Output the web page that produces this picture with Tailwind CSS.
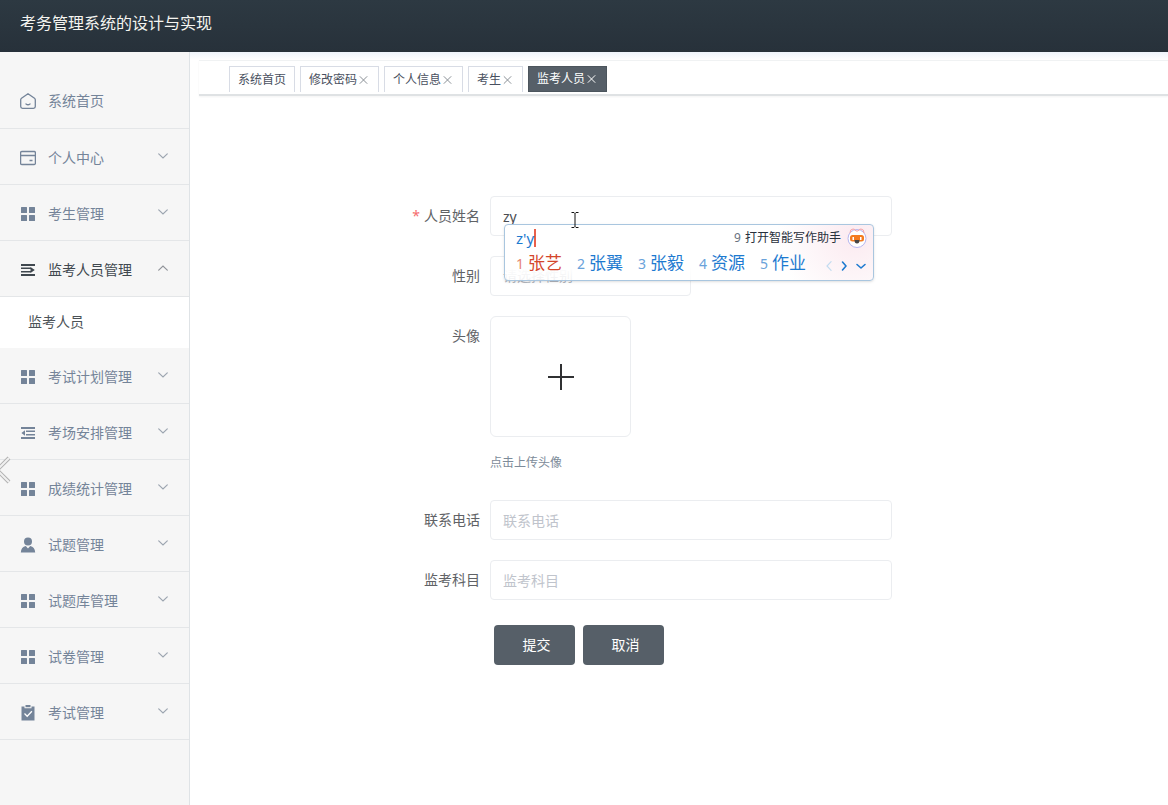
<!DOCTYPE html>
<html lang="zh-CN">
<head>
<meta charset="utf-8">
<meta name="viewport" content="width=device-width, initial-scale=1">
<title>考务管理系统的设计与实现</title>
<script src="https://cdn.jsdelivr.net/npm/@tailwindcss/browser@4"></script>
</head>
<body class="flex min-h-screen flex-col bg-white font-['Noto_Sans','Noto_Sans_CJK_SC',sans-serif] text-sm text-[#606266]">

<svg class="hidden" aria-hidden="true">
  <symbol id="grid" viewBox="0 0 16 16"><path fill="currentColor" d="M1.5 1h5q.5 0 .5.5v5q0 .5-.5.5h-5q-.5 0-.5-.5v-5q0-.5.5-.5zM9.500 1h5q.5 0 .5.5v5q0 .5-.5.5h-5q-.5 0-.5-.5v-5q0-.5.5-.5zM1.500 9h5q.5 0 .5.5v5q0 .5-.5.5h-5q-.5 0-.5-.5v-5q0-.5.5-.5zM9.500 9h5q.5 0 .5.5v5q0 .5-.5.5h-5q-.5 0-.5-.5v-5q0-.5.5-.5z"/></symbol>
  <symbol id="home" viewBox="0 0 16 16"><path fill="none" stroke="currentColor" stroke-width="1.300" stroke-linecap="round" stroke-linejoin="round" d="M8 .7 1.500 5.300q-.8.6-.8 1.500V13.500q0 1.800 1.800 1.800h11q1.800 0 1.800-1.800V6.800q0-.9-.8-1.500zM6 11q2 1.500 4 0"/></symbol>
  <symbol id="card" viewBox="0 0 16 16"><path fill="none" stroke="currentColor" stroke-width="1.300" d="M1.800 1.500h12.400q1.200 0 1.200 1.200v10.600q0 1.200-1.200 1.200H1.800q-1.200 0-1.200-1.200V2.700q0-1.200 1.200-1.200zM.6 5.500h14.800M9.500 10.500h3"/></symbol>
  <symbol id="unfold" viewBox="0 0 16 16"><path fill="currentColor" d="M1 2h14v2H1zM1 12h14v2H1zM1 5.400h9.500V7H1zM1 9h9.500v1.600H1zM10.500 5 14.800 8l-4.300 3z"/></symbol>
  <symbol id="fold" viewBox="0 0 16 16"><path fill="currentColor" d="M1 2h14v2H1zM1 12h14v2H1zM6 5.400h9V7H6zM6 9h9v1.600H6zM5 5.300 1.400 8 5 10.700z"/></symbol>
  <symbol id="user" viewBox="0 0 16 16"><circle cx="8" cy="4.500" r="4" fill="currentColor"/><path fill="currentColor" d="M.8 15.500C1 11.500 2.800 9.300 5.800 8.900L8 11.600l2.200-2.700c3 .4 4.800 2.600 5 6.600z"/></symbol>
  <symbol id="task" viewBox="0 0 16 16"><path fill="currentColor" d="M5.500 0h5v2.200h-5z"/><path fill="currentColor" d="M1.500 1.500h3v1.800h7V1.500h3v14h-13z"/><path fill="none" stroke="#fff" stroke-width="1.300" d="m4.500 8.500 2.700 2.700 4.700-4.900"/></symbol>
  <symbol id="down" viewBox="0 0 12 12"><path fill="none" stroke="currentColor" stroke-width="1.200" stroke-linecap="round" d="m1.700 3.900 4.300 4.100 4.300-4.100"/></symbol>
  <symbol id="arrow" viewBox="0 0 12 12"><path fill="none" stroke="currentColor" stroke-width="1.600" stroke-linecap="round" stroke-linejoin="round" d="m2 4.500 4 3.500 4-3.500"/></symbol>
  <symbol id="close" viewBox="0 0 10 10"><path fill="none" stroke="currentColor" d="m1.300 1.300 7.400 7.400m0-7.400-7.400 7.400"/></symbol>
</svg>

<header class="flex h-[52px] items-start bg-linear-to-b from-[#2d3942] to-[#27313a] px-5 pt-[11px]">
  <h1 class="text-base leading-6 text-[#f4f4f0]">考务管理系统的设计与实现</h1>
</header>

<div class="relative flex flex-1">
  <nav class="w-[190px] shrink-0 border-r border-[#dfe3e6] bg-[#f6f6f6] pt-[21px] text-[#748499]">
    <a href="#" class="flex h-14 items-center gap-3 border-b border-[#e4e6e8] px-5"><svg class="size-4"><use href="#home"/></svg>系统首页</a>
    <button type="button" class="flex h-14 w-full items-center gap-3 border-b border-[#e4e6e8] px-5 pt-0.5"><svg class="size-4"><use href="#card"/></svg>个人中心<svg class="mb-1 ml-auto size-3 text-[#9ca5b0]"><use href="#down"/></svg></button>
    <button type="button" class="flex h-14 w-full items-center gap-3 border-b border-[#e4e6e8] px-5 pt-0.5"><svg class="size-4"><use href="#grid"/></svg>考生管理<svg class="mb-1 ml-auto size-3 text-[#9ca5b0]"><use href="#down"/></svg></button>
    <button type="button" aria-expanded="true" class="flex h-14 w-full items-center gap-3 border-b border-[#e4e6e8] px-5 pt-0.5 text-[#40484f]"><svg class="size-4"><use href="#unfold"/></svg>监考人员管理<svg class="mb-1 ml-auto size-3 rotate-180 text-[#909399]"><use href="#down"/></svg></button>
    <a href="#" class="flex h-[51px] items-center bg-white px-7 pb-0.5 text-[#4c5358]">监考人员</a>
    <button type="button" class="flex h-14 w-full items-center gap-3 border-b border-[#e4e6e8] px-5 pt-0.5"><svg class="size-4"><use href="#grid"/></svg>考试计划管理<svg class="mb-1 ml-auto size-3 text-[#9ca5b0]"><use href="#down"/></svg></button>
    <button type="button" class="flex h-14 w-full items-center gap-3 border-b border-[#e4e6e8] px-5 pt-0.5"><svg class="size-4"><use href="#fold"/></svg>考场安排管理<svg class="mb-1 ml-auto size-3 text-[#9ca5b0]"><use href="#down"/></svg></button>
    <button type="button" class="flex h-14 w-full items-center gap-3 border-b border-[#e4e6e8] px-5 pt-0.5"><svg class="size-4"><use href="#grid"/></svg>成绩统计管理<svg class="mb-1 ml-auto size-3 text-[#9ca5b0]"><use href="#down"/></svg></button>
    <button type="button" class="flex h-14 w-full items-center gap-3 border-b border-[#e4e6e8] px-5 pt-0.5"><svg class="size-4"><use href="#user"/></svg>试题管理<svg class="mb-1 ml-auto size-3 text-[#9ca5b0]"><use href="#down"/></svg></button>
    <button type="button" class="flex h-14 w-full items-center gap-3 border-b border-[#e4e6e8] px-5 pt-0.5"><svg class="size-4"><use href="#grid"/></svg>试题库管理<svg class="mb-1 ml-auto size-3 text-[#9ca5b0]"><use href="#down"/></svg></button>
    <button type="button" class="flex h-14 w-full items-center gap-3 border-b border-[#e4e6e8] px-5 pt-0.5"><svg class="size-4"><use href="#grid"/></svg>试卷管理<svg class="mb-1 ml-auto size-3 text-[#9ca5b0]"><use href="#down"/></svg></button>
    <button type="button" class="flex h-14 w-full items-center gap-3 border-b border-[#e4e6e8] px-5 pt-0.5"><svg class="size-4"><use href="#task"/></svg>考试管理<svg class="mb-1 ml-auto size-3 text-[#9ca5b0]"><use href="#down"/></svg></button>
  </nav>

  <!-- Previous-page handle at the window edge -->
  <button type="button" aria-label="上一页" class="absolute top-[404px] left-0">
    <svg class="h-7 w-3" viewBox="0 0 12 28" fill="none"><path stroke="#b0b0b0" stroke-width="4" d="M9 2-3 14 9 26"/><path stroke="#f0f0f0" stroke-width="2" d="M9 2-3 14 9 26"/></svg>
  </button>

  <main class="min-w-0 flex-1">
    <div class="h-2 bg-linear-to-b from-[#eef4fb] to-white"></div>
    <div class="ml-[9px] flex h-9 items-end gap-[5px] border-t border-b-2 border-t-[#f0f2f3] border-b-[#dfe2e4] pb-0.5 pl-[30px] text-xs text-[#495060] shadow-xs">
      <a href="#" class="flex h-[26px] items-center border border-b-0 border-[#d8dce5] px-2">系统首页</a>
      <a href="#" class="flex h-[26px] items-center border border-b-0 border-[#d8dce5] px-2">修改密码<svg class="h-3 w-[13px] p-px text-[#8a9096]"><use href="#close"/></svg></a>
      <a href="#" class="flex h-[26px] items-center border border-b-0 border-[#d8dce5] px-2">个人信息<svg class="h-3 w-[13px] p-px text-[#8a9096]"><use href="#close"/></svg></a>
      <a href="#" class="flex h-[26px] items-center border border-b-0 border-[#d8dce5] px-2">考生<svg class="h-3 w-[13px] p-px text-[#8a9096]"><use href="#close"/></svg></a>
      <a href="#" aria-current="page" class="flex h-[26px] items-center border border-[#4c555d] bg-[#565f68] px-2 text-white">监考人员<svg class="h-3 w-[13px] p-px"><use href="#close"/></svg></a>
    </div>

    <form class="ml-[210px] flex max-w-[492px] flex-col gap-5 pt-[100px]">
      <div class="flex gap-2.5">
        <label for="name" class="w-20 shrink-0 text-right leading-10"><span class="mr-1 text-[#f56c6c]">*</span>人员姓名</label>
        <div class="relative flex-1">
          <input id="name" type="text" value="zy" class="h-10 w-full rounded border border-[#ebedf0] px-3 text-[#4a4d52] outline-none">

          <!-- Input method candidate window -->
          <div class="absolute top-7 left-[14px] z-10 flex h-[57px] w-[370px] flex-col rounded-sm border border-[#a9c6df] bg-[radial-gradient(circle_at_95%_20%,#fbeaf0,transparent_22%),linear-gradient(white_75%,#ffffffcc)] pr-1.5 pl-[11px] text-[#1d7ad0] shadow-sm">
            <div class="flex h-[26px] items-center">
              <span class="border-r-2 border-[#e8604c] text-[15px] leading-[18px]">z'y</span>
              <span class="ml-auto text-xs text-[#28303c]"><span class="mr-1 text-[#68727e]">9</span>打开智能写作助手</span>
              <svg class="ml-1.5 size-5" viewBox="0 0 20 20" fill="none"><circle cx="10" cy="10.500" r="9" fill="#fff" stroke="#b6b8f0"/><path stroke="#f4a3a6" d="M3 5Q3 1 6 1q2 0 3 2h2q1-2 3-2 3 0 3 4"/><rect x="3" y="7" width="14" height="6.500" rx="2.500" fill="#f47b20"/><path fill="#fff" d="M5.500 9h1.500v3H5.500zM13 9h1.500v3H13z"/><path fill="#454545" d="M7.500 12h5q0 3.500-2.500 3.500T7.500 12z"/></svg>
            </div>
            <div class="flex h-[29px] items-center gap-[15px] pb-1 text-[17px] whitespace-nowrap">
              <span class="text-[#d4462c]"><span class="mr-1 text-sm text-[#e68572]">1</span>张艺</span>
              <span><span class="mr-1 text-sm text-[#6aa2da]">2</span>张翼</span>
              <span><span class="mr-1 text-sm text-[#6aa2da]">3</span>张毅</span>
              <span><span class="mr-1 text-sm text-[#6aa2da]">4</span>资源</span>
              <span><span class="mr-1 text-sm text-[#6aa2da]">5</span>作业</span>
              <span class="mt-1 ml-auto flex gap-[3px]">
                <svg class="size-3 rotate-90 text-[#c3dcf0]"><use href="#down"/></svg>
                <svg class="size-3 -rotate-90"><use href="#arrow"/></svg>
                <svg class="ml-0.5 size-3"><use href="#arrow"/></svg>
              </span>
            </div>
          </div>

          <!-- Text pointer -->
          <svg class="absolute top-4 left-[81px] z-20 h-4 w-2" viewBox="0 0 8 16" fill="none" stroke="#111"><path d="M.5.5H3l1 1 1-1h2.500M.5 15.500H3l1-1 1 1h2.500M4 1.500v13"/></svg>
        </div>
      </div>

      <div class="flex gap-2.5">
        <label for="gender" class="w-20 shrink-0 text-right leading-10">性别</label>
        <select id="gender" class="h-10 w-[201px] appearance-none rounded border border-[#ebedf0] px-3 text-[#b4b8bf]"><option>请选择性别</option></select>
      </div>

      <div class="flex gap-2.5">
        <label for="avatar" class="w-20 shrink-0 text-right leading-10">头像</label>
        <div>
          <button id="avatar" type="button" aria-label="上传头像" class="flex h-[121px] w-[141px] items-center justify-center rounded-md border border-[#ebedf0]">
            <svg class="size-7" viewBox="0 0 28 28" fill="none" stroke="#303133" stroke-width="2"><path d="M1 14h26M14 1v26"/></svg>
          </button>
          <p class="mt-4 mb-[7px] text-xs leading-5 text-[#7d8b99]">点击上传头像</p>
        </div>
      </div>

      <div class="flex gap-2.5">
        <label for="phone" class="w-20 shrink-0 text-right leading-10">联系电话</label>
        <input id="phone" type="text" placeholder="联系电话" class="h-10 min-w-0 flex-1 rounded border border-[#ebedf0] px-3 placeholder:text-[#c0c4cc]">
      </div>

      <div class="flex gap-2.5">
        <label for="subject" class="w-20 shrink-0 text-right leading-10">监考科目</label>
        <input id="subject" type="text" placeholder="监考科目" class="h-10 min-w-0 flex-1 rounded border border-[#ebedf0] px-3 placeholder:text-[#c0c4cc]">
      </div>

      <div class="mt-[5px] flex gap-2 pl-[94px]">
        <button type="submit" class="h-10 w-[81px] rounded bg-[#565f68] pl-1 text-white">提交</button>
        <button type="button" class="h-10 w-[81px] rounded bg-[#565f68] pl-1 text-white">取消</button>
      </div>
    </form>
  </main>
</div>
</body>
</html>
